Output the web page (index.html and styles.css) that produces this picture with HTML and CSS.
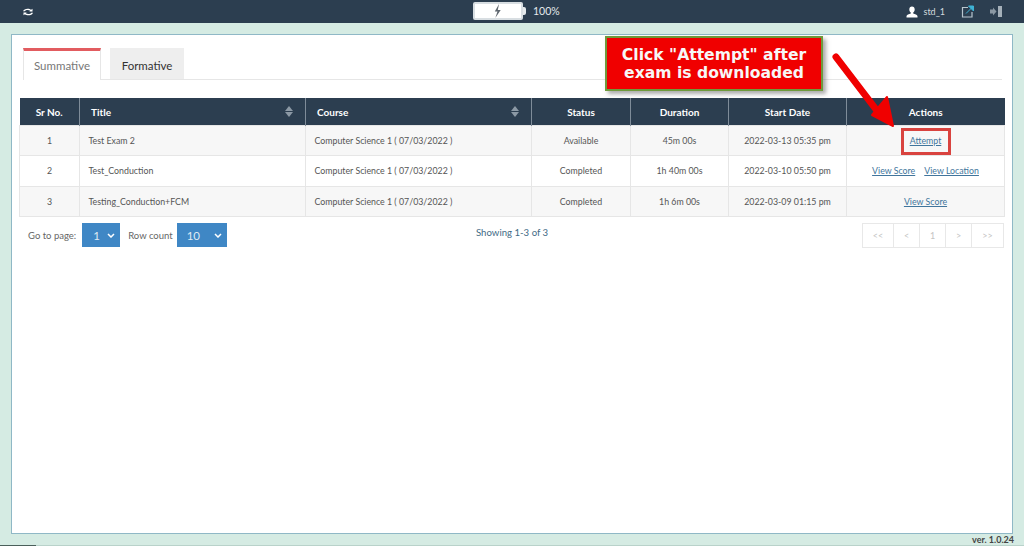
FILE: index.html
```html
<!DOCTYPE html>
<html lang="en">
<head>
  <meta charset="UTF-8">
  <title>Exams</title>
  <link rel="stylesheet" href="styles.css">
</head>
<body>

  <header class="topbar">
    <div class="topbar-left">
      <svg class="icon-sync" width="12" height="8" viewBox="0 0 12 10" preserveAspectRatio="none">
        <path d="M1 4.200C1.600 2 3.400.9 5.600.9c1.500 0 2.700.5 3.500 1.400L10.500 1v3.400H7.200l1-1c-.6-.5-1.500-.9-2.600-.9-1.200 0-2.200.4-2.900 1.700z" fill="#fff"/>
        <path d="M11 5.800C10.400 8 8.600 9.100 6.400 9.100c-1.500 0-2.700-.5-3.500-1.400L1.500 9V5.600h3.300l-1 1c.6.500 1.500.9 2.600.9 1.200 0 2.200-.4 2.900-1.700z" fill="#fff"/>
      </svg>
    </div>
    <div class="topbar-center">
      <div class="battery">
        <svg class="icon-bolt" width="8" height="14" viewBox="1 0 7 13">
          <path d="M5.500 0L1.500 7H4L2 13 7 5.500H4.300z" fill="#5f676f"/>
        </svg>
      </div>
      <span class="battery-tip"></span>
      <span class="battery-text">100%</span>
    </div>
    <div class="topbar-right">
      <svg class="icon-user" width="12" height="12" viewBox="0 0 12 12">
        <path d="M6 0.500c1.700 0 2.700 1.200 2.700 2.900 0 1.300-.6 2.500-1.500 3.100v1.100c1.700.5 4.300 1.100 4.300 2.600v1.300H.5v-1.300c0-1.500 2.600-2.100 4.300-2.600V6.500C3.900 5.900 3.300 4.700 3.300 3.400 3.300 1.700 4.300.5 6 .5z" fill="#fff"/>
      </svg>
      <span class="user-name">std_1</span>
      <svg class="icon-open" width="13" height="13" viewBox="0 0 13 13">
        <path d="M7 2.500H1.500v9.500H11V7" fill="none" stroke="#b9c6cf" stroke-width="1.200"/>
        <path d="M5 8.500L10.500 3M7.500 1h5v5z" fill="#3fb3d6" stroke="#3fb3d6" stroke-width="1"/>
      </svg>
      <svg class="icon-exit" width="12" height="11" viewBox="0 0 12 11">
        <path d="M0 3.500h3V1.500L6.500 5.500 3 9.500v-2H0z" fill="#8b98a3"/>
        <rect x="8" y="0" width="4" height="11" fill="#a5b0b9"/>
      </svg>
    </div>
  </header>

  <main class="main">
    <section class="panel">
      <nav class="tabs">
        <a class="tab tab-active">Summative</a>
        <a class="tab">Formative</a>
      </nav>

      <table class="exam-table">
        <colgroup>
          <col class="col-sr">
          <col class="col-title">
          <col class="col-course">
          <col class="col-status">
          <col class="col-duration">
          <col class="col-date">
          <col class="col-actions">
        </colgroup>
        <thead>
          <tr>
            <th>Sr No.</th>
            <th class="sortable">Title<span class="sort"></span></th>
            <th class="sortable">Course<span class="sort"></span></th>
            <th>Status</th>
            <th>Duration</th>
            <th>Start Date</th>
            <th>Actions</th>
          </tr>
        </thead>
        <tbody>
          <tr>
            <td>1</td>
            <td class="left">Test Exam 2</td>
            <td class="left">Computer Science 1 ( 07/03/2022 )</td>
            <td>Available</td>
            <td>45m 00s</td>
            <td>2022-03-13 05:35 pm</td>
            <td><a class="action">Attempt</a></td>
          </tr>
          <tr>
            <td>2</td>
            <td class="left">Test_Conduction</td>
            <td class="left">Computer Science 1 ( 07/03/2022 )</td>
            <td>Completed</td>
            <td>1h 40m 00s</td>
            <td>2022-03-10 05:50 pm</td>
            <td><a class="action">View Score</a><a class="action">View Location</a></td>
          </tr>
          <tr>
            <td>3</td>
            <td class="left">Testing_Conduction+FCM</td>
            <td class="left">Computer Science 1 ( 07/03/2022 )</td>
            <td>Completed</td>
            <td>1h 6m 00s</td>
            <td>2022-03-09 01:15 pm</td>
            <td><a class="action">View Score</a></td>
          </tr>
        </tbody>
      </table>

      <div class="table-footer">
        <div class="page-controls">
          <span class="label-page">Go to page:</span>
          <div class="select select-page">1<svg width="8" height="5" viewBox="0 0 8 5"><path d="M1 1l3 3 3-3" fill="none" stroke="#fff" stroke-width="1.500"/></svg></div>
          <span class="label-rows">Row count</span>
          <div class="select select-rows">10<svg width="8" height="5" viewBox="0 0 8 5"><path d="M1 1l3 3 3-3" fill="none" stroke="#fff" stroke-width="1.500"/></svg></div>
        </div>
        <div class="showing">Showing 1-3 of 3</div>
        <div class="pager">
          <span>&lt;&lt;</span><span>&lt;</span><span>1</span><span>&gt;</span><span>&gt;&gt;</span>
        </div>
      </div>

      <!-- annotations drawn on top of the screenshot -->
      <div class="callout">Click "Attempt" after<br>exam is downloaded</div>
      <svg class="arrow" width="70" height="84" viewBox="0 0 70 84">
        <path d="M5 5L47 60" stroke="#f00000" stroke-width="7" stroke-linecap="round" fill="none"/>
        <path d="M62 74L41 63 56 45z" fill="#f00000" stroke="#f00000" stroke-width="2" stroke-linejoin="round"/>
      </svg>
      <div class="attempt-box"></div>
    </section>
  </main>

  <footer class="version">ver. 1.0.24</footer>

</body>
</html>
```

FILE: styles.css
```css
* {
  box-sizing: border-box;
}

html, body {
  height: 100%;
}

body {
  margin: 0;
  height: 546px;
  display: flex;
  flex-direction: column;
  overflow: hidden;
  font-family: 'Lato', sans-serif;
  background: #d5ebe3;
  color: #555;
}

.topbar {
  height: 23px;
  flex: none;
  display: flex;
  align-items: center;
  justify-content: space-between;
  background: #2c3e50;
  color: #fff;
  position: relative;
}

.topbar-left {
  padding-left: 22px;
  display: flex;
}

.topbar-center {
  position: absolute;
  left: 473px;
  top: 2px;
  display: flex;
  align-items: center;
}

.battery {
  width: 50px;
  height: 18px;
  border: 2px solid #d8dee2;
  border-radius: 2px;
  background: #fff;
  display: flex;
  align-items: center;
  justify-content: center;
}

.icon-bolt {
  flex: none;
}

.battery-tip {
  width: 3px;
  height: 8px;
  background: #e6eaed;
  border-radius: 0 2px 2px 0;
}

.battery-text {
  margin-left: 7px;
  font-size: 10.500px;
  color: #e4e9ec;
}

.topbar-right {
  display: flex;
  align-items: center;
  padding-right: 22px;
}

.icon-user {
  margin-right: 0;
}

.user-name {
  margin-left: 5px;
  font-size: 9px;
  color: #d3dade;
}

.icon-open {
  margin-left: 16px;
}

.icon-exit {
  margin-left: 16px;
}

.main {
  flex: 1;
  display: flex;
  padding: 11px 11px 0;
}

.panel {
  flex: 1;
  position: relative;
  background: #fff;
  border: 1px solid #8fb8c6;
  padding: 13px 7px 0;
}

.tabs {
  display: flex;
  gap: 9px;
  margin: 0 3px 18px 4px;
  height: 32px;
  border-bottom: 1px solid #e6e6e6;
}

.tab {
  width: 74px;
  height: 31px;
  padding-top: 3px;
  display: flex;
  align-items: center;
  justify-content: center;
  font-size: 11.500px;
  color: #333;
  background: #eee;
}

.tab-active {
  width: 78px;
  height: 32px;
  padding-top: 0;
  border-top: 3px solid #e25c60;
  border-left: 1px solid #e6e6e6;
  border-right: 1px solid #e6e6e6;
  background: #fff;
  color: #777;
}

.exam-table {
  width: 985px;
  table-layout: fixed;
  border-collapse: collapse;
  font-size: 8.800px;
}

.col-sr { width: 60px; }
.col-title { width: 226px; }
.col-course { width: 226px; }
.col-status { width: 99px; }
.col-duration { width: 98px; }
.col-date { width: 118px; }
.col-actions { width: 158px; }

.exam-table th {
  height: 27px;
  position: relative;
  background: #2c3e50;
  color: #fff;
  font-size: 10px;
  font-weight: 700;
  border-left: 1px solid #7f8c99;
  padding: 1px 0 0;
}

.exam-table th:first-child {
  border-left: none;
}

.exam-table th.sortable {
  text-align: left;
  padding-left: 11px;
}

.sort {
  position: absolute;
  right: 12px;
  top: 8px;
  width: 8px;
  height: 11px;
}

.sort::before,
.sort::after {
  content: "";
  position: absolute;
  left: 0;
  border-left: 4px solid transparent;
  border-right: 4px solid transparent;
}

.sort::before {
  top: 0;
  border-bottom: 5px solid #8c99a5;
}

.sort::after {
  bottom: 0;
  border-top: 5px solid #8c99a5;
}

.exam-table td {
  height: 30.500px;
  padding: 0;
  text-align: center;
  border: 1px solid #e6e6e6;
  color: #555;
}

.exam-table td.left {
  text-align: left;
  padding-left: 8.500px;
}

.exam-table tbody tr:nth-child(odd) td {
  background: #f7f7f7;
}

.action {
  color: #41759c;
  text-decoration: underline;
  margin: 0 4.500px;
}

.table-footer {
  position: relative;
  display: flex;
  justify-content: space-between;
  margin-top: 6px;
  width: 985px;
}

.page-controls {
  display: flex;
  align-items: center;
  height: 24px;
  padding-left: 9px;
  font-size: 9.500px;
  color: #666;
}

.label-page {
  margin-right: 6px;
}

.label-rows {
  margin-right: 4px;
}

.select {
  height: 24px;
  background: #3f87c5;
  color: #dfeaf3;
  font-size: 11.500px;
  display: flex;
  align-items: center;
  justify-content: space-between;
  padding-right: 5px;
}

.select-page {
  width: 38px;
  margin-right: 8px;
  padding-left: 11px;
}

.select-rows {
  width: 50px;
  padding-left: 10px;
}

.showing {
  position: absolute;
  left: 457px;
  top: 4px;
  font-size: 9.600px;
  line-height: 12px;
  color: #3f6a85;
}

.pager {
  display: flex;
  height: 25px;
  border: 1px solid #e8e8e8;
  font-size: 9px;
  color: #c4c4c4;
}

.pager span {
  width: 26px;
  display: flex;
  align-items: center;
  justify-content: center;
  border-left: 1px solid #e8e8e8;
}

.pager span:first-child {
  border-left: none;
  width: 30px;
}

.pager span:last-child {
  width: 32px;
}

.callout {
  position: absolute;
  left: 593px;
  top: 1px;
  width: 218px;
  height: 55px;
  background: #f00000;
  border: 2px solid #6f9a3c;
  box-shadow: 3px 3px 4px rgba(90, 90, 90, 0.5);
  color: #f7f7f7;
  font-family: 'DejaVu Sans', sans-serif;
  font-size: 15.600px;
  font-weight: 700;
  line-height: 18px;
  text-align: center;
  padding-top: 8px;
}

.arrow {
  position: absolute;
  left: 819px;
  top: 17px;
}

.attempt-box {
  position: absolute;
  left: 889px;
  top: 93px;
  width: 50px;
  height: 27px;
  border: 3px solid #d9433f;
}

.version {
  height: 12px;
  flex: none;
  position: relative;
  padding-right: 10px;
  text-align: right;
  font-size: 9px;
  font-weight: 700;
  line-height: 11px;
  color: #444;
  border-bottom: 1px solid #b9d2ca;
}

.version::after {
  content: "";
  position: absolute;
  left: 0;
  bottom: -1px;
  width: 36px;
  height: 1px;
  background: #4a5f5a;
}
```
